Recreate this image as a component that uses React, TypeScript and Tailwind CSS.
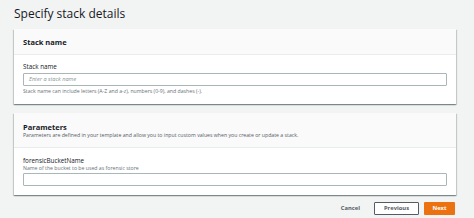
export default function App() {
  return (
    <div
      className="w-[474px] h-[218px] bg-[#f2f3f3] pl-[14px] pr-[18px] overflow-hidden text-[#16191f]"
      style={{ fontFamily: '"Open Sans", "Noto Sans", sans-serif' }}
    >
      <h1 className="pt-[7px] mb-[8px] text-[12px] leading-[14px] font-normal text-[#16191f]">
        Specify stack details
      </h1>

      <section className="bg-white shadow-[0_1px_1px_0_rgba(0,28,36,0.3),1px_1px_1px_0_rgba(0,28,36,0.15),-1px_1px_1px_0_rgba(0,28,36,0.15)]">
        <div className="h-[26px] px-[9px] flex items-center bg-[#fafafa] border-b border-[#eaeded]">
          <h2 className="text-[7.5px] leading-[10px] font-bold">Stack name</h2>
        </div>
        <div className="px-[9px] pt-[8px] pb-[10px] flex flex-col">
          <label className="text-[6.3px] leading-[8px] font-medium">Stack name</label>
          <div className="mt-[2px] h-[13px] border border-[#aab7b8] rounded-[1px] px-[5px] flex items-center">
            <span className="text-[5.6px] italic text-[#879596]">Enter a stack name</span>
          </div>
          <p className="mt-[2px] text-[5.2px] leading-[6px] text-[#687078]">
            Stack name can include letters (A-Z and a-z), numbers (0-9), and dashes (-).
          </p>
        </div>
      </section>

      <section className="mt-[9px] bg-white shadow-[0_1px_1px_0_rgba(0,28,36,0.3),1px_1px_1px_0_rgba(0,28,36,0.15),-1px_1px_1px_0_rgba(0,28,36,0.15)]">
        <div className="px-[9px] pt-[9px] pb-[9px] bg-[#fafafa] border-b border-[#eaeded]">
          <h2 className="text-[7.5px] leading-[10px] font-bold">Parameters</h2>
          <p className="text-[5.2px] leading-[6px] text-[#545b64]">
            Parameters are defined in your template and allow you to input custom values when you create or update a stack.
          </p>
        </div>
        <div className="px-[9px] pt-[9px] pb-[9px] flex flex-col">
          <label className="text-[6.3px] leading-[8px] font-medium">forensicBucketName</label>
          <p className="text-[5.2px] leading-[6px] text-[#687078]">
            Name of the bucket to be used as forensic store
          </p>
          <div className="mt-[2px] h-[13px] border border-[#aab7b8] rounded-[1px]" />
        </div>
      </section>

      <div className="mt-[7px] flex justify-end items-center pr-[1px]">
        <button className="h-[13px] px-[9px] text-[5.8px] font-bold text-[#545b64]">Cancel</button>
        <button className="ml-[5px] h-[13px] w-[45px] border border-[#545b64] rounded-[1px] bg-white text-[5.8px] font-bold text-[#545b64]">
          Previous
        </button>
        <button className="ml-[5px] h-[13px] w-[31px] rounded-[1px] bg-[#ec7211] text-[5.8px] font-bold text-white">
          Next
        </button>
      </div>
    </div>
  )
}
